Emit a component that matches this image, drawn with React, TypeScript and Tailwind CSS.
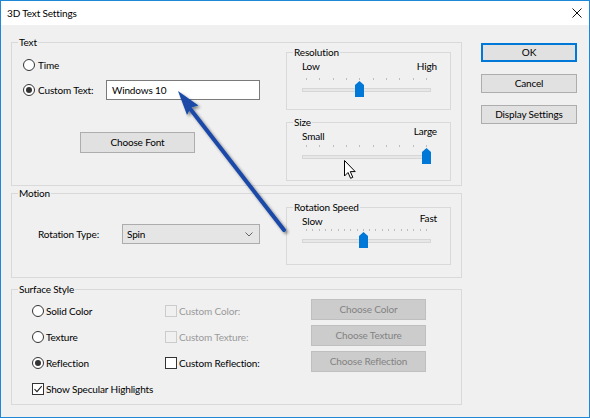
import type { ReactNode } from 'react';

// Group box with the caption sitting on the top border
function Group({ label, className, children }: { label: string; className: string; children?: ReactNode }) {
  return (
    <div className={`relative border border-[#d9d9d9] ${className}`}>
      <span className="absolute -top-[7px] left-[6px] px-[1px] bg-[#f0f0f0] leading-[13px]">{label}</span>
      {children}
    </div>
  );
}

function Radio({ checked = false }: { checked?: boolean }) {
  return (
    <span className="w-[12px] h-[12px] rounded-full border border-[#333] bg-white flex items-center justify-center shrink-0">
      {checked && <span className="w-[6px] h-[6px] rounded-full bg-[#333]" />}
    </span>
  );
}

function Check({ checked = false, disabled = false }: { checked?: boolean; disabled?: boolean }) {
  return (
    <span
      className={`w-[12px] h-[12px] border flex items-center justify-center shrink-0 ${
        disabled ? 'border-[#cccccc] bg-[#f0f0f0]' : 'border-[#333] bg-white'
      }`}
    >
      {checked && (
        <svg width="10" height="10" viewBox="0 0 10 10">
          <path d="M1.5 5.2 L4 7.6 L8.7 2.2" fill="none" stroke="#222" strokeWidth="1.1" />
        </svg>
      )}
    </span>
  );
}

function Thumb() {
  return (
    <svg width="9" height="16" viewBox="0 0 9 16">
      <path d="M4.5 0 L9 4 L9 16 L0 16 L0 4 Z" fill="#0078d7" />
    </svg>
  );
}

function Slider({
  label,
  low,
  high,
  ticks,
  value,
  areaMt,
  highMt,
  className,
}: {
  label: string;
  low: string;
  high: string;
  ticks: number;
  value: number;
  areaMt: string;
  highMt: string;
  className: string;
}) {
  return (
    <Group label={label} className={`w-[165px] ${className}`}>
      <div className="flex justify-between items-start pt-[7px] pl-[15px] pr-[13px] leading-[13px]">
        <span>{low}</span>
        <span className={highMt}>{high}</span>
      </div>
      <div className={`relative h-[20px] ml-[15px] mr-[19px] ${areaMt}`}>
        <div className="absolute top-0 left-[4px] right-[4px] flex justify-between">
          {Array.from({ length: ticks }).map((_, i) => (
            <span key={i} className="w-[1px] h-[2px] bg-[#bdbdbd]" />
          ))}
        </div>
        <div className="absolute top-[10px] left-0 right-0 h-[4px] border border-[#d6d6d6] bg-[#e7e7e7]" />
        <div className="absolute top-[3px]" style={{ left: `${value * 120}px` }}>
          <Thumb />
        </div>
      </div>
    </Group>
  );
}

function Button({ children, className = '', disabled = false }: { children: ReactNode; className?: string; disabled?: boolean }) {
  return (
    <div
      className={`flex items-center justify-center border ${
        disabled ? 'bg-[#cccccc] border-[#bfbfbf] text-[#838383]' : 'bg-[#e1e1e1] border-[#adadad]'
      } ${className}`}
    >
      {children}
    </div>
  );
}

export default function App() {
  return (
    <div className="relative w-[590px] h-[418px] border border-[#1e88d8] bg-[#f0f0f0] flex flex-col overflow-hidden text-[10px] tracking-[-0.15px] text-black font-['Lato',sans-serif] leading-[13px]">
      {/* Title bar */}
      <div className="h-[24px] bg-white flex items-center justify-between pl-[6px] pr-[7px] shrink-0">
        <span>3D Text Settings</span>
        <svg width="10" height="10" viewBox="0 0 10 10">
          <path d="M0.5 0.5 L9.5 9.5 M9.5 0.5 L0.5 9.5" stroke="#111" strokeWidth="1" />
        </svg>
      </div>

      <div className="flex flex-1 pl-[10px] pt-[17px]">
        <div className="w-[451px] flex flex-col">
          {/* Text */}
          <Group label="Text" className="h-[144px] flex">
            <div className="flex flex-col pl-[11px] pt-[16px]">
              <div className="flex items-center h-[12px]">
                <Radio />
                <span className="ml-[3px]">Time</span>
              </div>
              <div className="flex items-center h-[20px] mt-[9px]">
                <Radio checked />
                <span className="ml-[3px] w-[68px]">Custom Text:</span>
                <div className="w-[154px] h-[20px] bg-white border border-[#7a7a7a] flex items-center pl-[5px]">Windows 10</div>
              </div>
              <Button className="ml-[57px] mt-[32px] w-[115px] h-[21px]">Choose Font</Button>
            </div>
            <div className="ml-auto mr-[10px] pt-[9px] flex flex-col">
              <Slider label="Resolution" low="Low" high="High" ticks={10} value={4 / 9} areaMt="mt-[5px]" highMt="" className="h-[58px]" />
              <Slider
                label="Size"
                low="Small"
                high="Large"
                ticks={10}
                value={1}
                areaMt="mt-[2px]"
                highMt="-mt-[5px]"
                className="h-[59px] mt-[12px]"
              />
            </div>
          </Group>

          {/* Motion */}
          <Group label="Motion" className="h-[85px] mt-[7px] flex">
            <div className="flex items-center pl-[26px] pt-[30px] self-start">
              <span className="w-[84px]">Rotation Type:</span>
              <div className="w-[138px] h-[20px] bg-[#e5e5e5] border border-[#acacac] flex items-center justify-between pl-[4px] pr-[6px]">
                <span>Spin</span>
                <svg width="8" height="5" viewBox="0 0 8 5">
                  <path d="M0.5 0.5 L4 4 L7.5 0.5" fill="none" stroke="#666" strokeWidth="1" />
                </svg>
              </div>
            </div>
            <div className="ml-auto mr-[10px] mt-[13px]">
              <Slider
                label="Rotation Speed"
                low="Slow"
                high="Fast"
                ticks={20}
                value={9 / 19}
                areaMt="mt-[1px]"
                highMt="-mt-[3px]"
                className="h-[58px]"
              />
            </div>
          </Group>

          {/* Surface Style */}
          <Group label="Surface Style" className="h-[116px] mt-[11px] flex">
            <div className="flex flex-col pl-[20px] pt-[8px] w-[153px]">
              {['Solid Color', 'Texture', 'Reflection'].map((t) => (
                <div key={t} className="flex items-center h-[26px]">
                  <Radio checked={t === 'Reflection'} />
                  <span className="ml-[2px]">{t}</span>
                </div>
              ))}
              <div className="flex items-center h-[26px]">
                <Check checked />
                <span className="ml-[2px] whitespace-nowrap">Show Specular Highlights</span>
              </div>
            </div>
            <div className="flex flex-col pt-[8px] w-[146px]">
              <div className="flex items-center h-[26px] text-[#9a9a9a]">
                <Check disabled />
                <span className="ml-[2px]">Custom Color:</span>
              </div>
              <div className="flex items-center h-[26px] text-[#9a9a9a]">
                <Check disabled />
                <span className="ml-[2px]">Custom Texture:</span>
              </div>
              <div className="flex items-center h-[26px]">
                <Check />
                <span className="ml-[2px]">Custom Reflection:</span>
              </div>
            </div>
            <div className="flex flex-col gap-[5px] pt-[9px]">
              <Button disabled className="w-[115px] h-[21px]">Choose Color</Button>
              <Button disabled className="w-[115px] h-[21px]">Choose Texture</Button>
              <Button disabled className="w-[115px] h-[21px]">Choose Reflection</Button>
            </div>
          </Group>
        </div>

        {/* Dialog buttons */}
        <div className="ml-[19px] mt-[1px] flex flex-col gap-[12px] w-[96px]">
          <Button className="h-[19px] !border-2 !border-[#0078d7]">OK</Button>
          <Button className="h-[19px]">Cancel</Button>
          <Button className="h-[19px]">Display Settings</Button>
        </div>
      </div>

      {/* Annotation arrow and mouse cursor drawn over the dialog */}
      <svg className="absolute left-0 top-0 pointer-events-none" width="590" height="418" viewBox="-1 -1 590 418">
        <defs>
          <filter id="sh" x="-20%" y="-20%" width="140%" height="140%">
            <feDropShadow dx="2" dy="2" stdDeviation="1.5" floodColor="#000" floodOpacity="0.45" />
          </filter>
        </defs>
        <g filter="url(#sh)">
          <line x1="282" y1="228" x2="186" y2="104" stroke="#1a4aa8" strokeWidth="4" strokeLinecap="round" />
          <path d="M176 89 L196.5 103.5 L189 105.5 L185 113 Z" fill="#1a4aa8" />
        </g>
        <path
          d="M342.5 158.5 L342.5 174 L346 170.5 L348.6 176.3 L350.8 175.3 L348.3 169.6 L353.2 169.6 Z"
          fill="#fff"
          stroke="#000"
          strokeWidth="1"
          strokeLinejoin="round"
        />
      </svg>
    </div>
  );
}
